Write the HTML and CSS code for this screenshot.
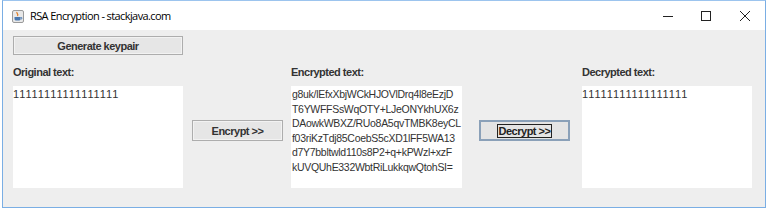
FILE: index.html
```html
<!DOCTYPE html>
<html>
<head>
<meta charset="utf-8">
<link rel="stylesheet" href="styles.css">
</head>
<body>
<div class="window">
  <div class="titlebar">
    <svg class="appicon" width="12" height="13" viewBox="0 0 12 13">
      <rect x="0.5" y="0.5" width="11" height="12" rx="1.5" fill="#e8e8e8" stroke="#9a9a9a"/>
      <path d="M5 2 C4 3.5 7 4 5.5 6" stroke="#e07a1f" stroke-width="1.2" fill="none"/>
      <path d="M2.5 7 H8.5 V9 C8.5 10 7.5 10.5 6.5 10.5 H4.5 C3.5 10.5 2.5 10 2.5 9 Z" fill="#4a78b0"/>
      <path d="M8.5 7.5 H9.8 V9 H8.5" stroke="#4a78b0" fill="none" stroke-width="0.8"/>
    </svg>
    <span class="title">RSA Encryption - stackjava.com</span>
    <div class="controls">
      <span class="ctl"><svg width="10" height="10" viewBox="0 0 10 10"><path d="M0 5.5 H10" stroke="#222" stroke-width="1"/></svg></span>
      <span class="ctl"><svg width="10" height="10" viewBox="0 0 10 10"><rect x="0.5" y="0.5" width="9" height="9" fill="none" stroke="#222" stroke-width="1"/></svg></span>
      <span class="ctl"><svg width="10" height="10" viewBox="0 0 10 10"><path d="M0 0 L10 10 M10 0 L0 10" stroke="#222" stroke-width="1"/></svg></span>
    </div>
  </div>
  <div class="content">
    <button class="btn gen">Generate keypair</button>
    <div class="row">
      <div class="col c1">
        <div class="label">Original text:</div>
        <div class="area">11111111111111111</div>
      </div>
      <div class="bcol b1"><button class="btn">Encrypt &gt;&gt;</button></div>
      <div class="col c2">
        <div class="label">Encrypted text:</div>
        <div class="area">g8uk/lEfxXbjWCkHJOVlDrq4l8eEzjD<br>T6YWFFSsWqOTY+LJeONYkhUX6z<br>DAowkWBXZ/RUo8A5qvTMBK8eyCL<br>f03riKzTdj85CoebS5cXD1lFF5WA13<br>d7Y7bbltwld110s8P2+q+kPWzl+xzF<br>kUVQUhE332WbtRiLukkqwQtohSI=</div>
      </div>
      <div class="bcol b2"><button class="btn focus"><span class="fr">Decrypt &gt;&gt;</span></button></div>
      <div class="col c3">
        <div class="label">Decrypted text:</div>
        <div class="area">11111111111111111</div>
      </div>
    </div>
  </div>
</div>
</body>
</html>
```
FILE: styles.css
```css
html, body { margin: 0; padding: 0; background: #ffffff; }
body { width: 768px; height: 210px; overflow: hidden; font-family: "Liberation Sans", Arial, sans-serif; }
.window {
  margin: 0 2px 0 2px;
  width: 762px;
  height: 206px;
  border: 1px solid #7aaee4;
  border-top: 1px solid #9cc4ee;
  background: #eeeeee;
  display: flex;
  flex-direction: column;
}
.titlebar {
  height: 29px;
  background: #ffffff;
  display: flex;
  align-items: center;
  padding-left: 9px;
}
.appicon { margin-top: 1px; }
.title {
  margin-left: 6px;
  font-family: "Open Sans", "DejaVu Sans", sans-serif;
  font-size: 11px;
  color: #000;
  letter-spacing: -0.6px;
}
.controls { margin-left: auto; display: flex; }
.ctl { width: 38px; height: 29px; display: flex; align-items: center; justify-content: center; }
.ctl:last-child { width: 40px; }
.content { flex: 1; padding: 6px 0 0 10px; }
.btn {
  font-family: "Liberation Sans", Arial, sans-serif;
  font-weight: bold;
  font-size: 11px;
  letter-spacing: -0.5px;
  color: #333;
  background: #e6e6e6;
  border: 1px solid #adadad;
  box-shadow: inset 0 0 0 1px #f2f2f2;
  padding: 0;
  margin: 0;
  display: flex;
  align-items: center;
  justify-content: center;
}
.gen { width: 170px; height: 19px; }
.row { display: flex; margin-top: 5px; }
.col { display: flex; flex-direction: column; }
.label { font-weight: bold; font-size: 11px; letter-spacing: -0.5px; color: #333; height: 13px; line-height: 13px; margin-top: 6px; }
.area {
  margin-top: 7px;
  height: 102px;
  background: #ffffff;
  font-size: 10.5px;
  line-height: 14.6px;
  color: #333;
  padding: 1px 0 0 1px;
  box-sizing: border-box;
  white-space: nowrap;
  overflow: hidden;
  letter-spacing: -0.3px;
}
.c1 .area, .c3 .area { font-size: 11px; letter-spacing: 0.9px; padding-left: 0; }
.c1 .area { width: 170px; }
.c2 .area { width: 171px; overflow: visible; }
.c3 .area { width: 170px; }
.bcol { display: flex; align-items: flex-start; padding-top: 60px; }
.bcol .btn { width: 91px; height: 21px; }
.b1 { margin-left: 9px; margin-right: 8px; }
.b2 { margin-left: 17px; margin-right: 12px; }
.focus { border: 2px solid #8aa0b8; background: #e4e4e4; box-shadow: none; }
.fr { border: 1px solid #222; padding: 0 1px; line-height: 12px; color: #222; }
```
